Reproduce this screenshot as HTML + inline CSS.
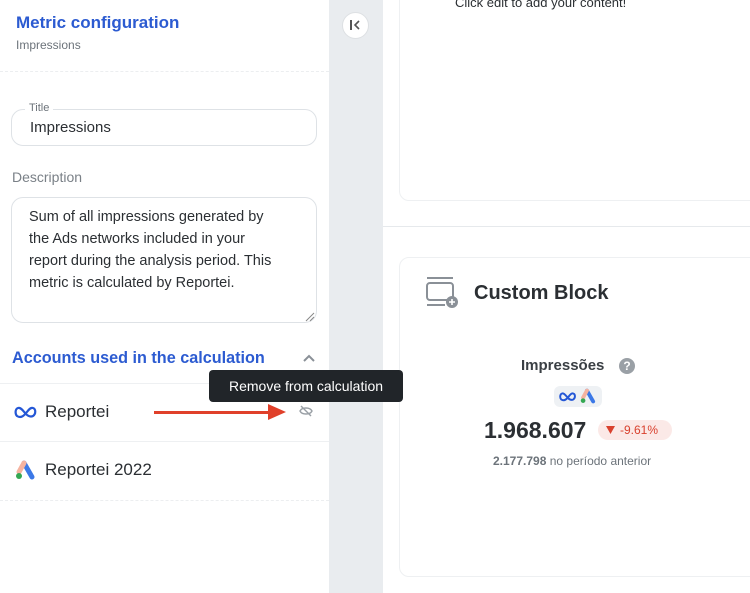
<!DOCTYPE html>
<html><head><style>
*{box-sizing:border-box;margin:0;padding:0}
body{width:750px;height:593px;overflow:hidden;background:#fff;font-family:"Liberation Sans",sans-serif;position:relative;color:#2b2f33}
.abs{position:absolute}
</style></head><body>
<div class="abs" style="left:0;top:0;width:329px;height:593px;background:#fff"></div>
<div class="abs" style="left:16px;top:13px;font-size:17px;font-weight:bold;color:#2c5bd1">Metric configuration</div>
<div class="abs" style="left:16px;top:38px;font-size:12px;color:#6c737a">Impressions</div>
<div class="abs" style="left:0;top:71px;width:329px;border-top:1px dashed #eceef0"></div>
<div class="abs" style="left:11px;top:109px;width:306px;height:37px;border:1px solid #dee2e6;border-radius:12px"></div>
<div class="abs" style="left:25px;top:102px;padding:0 4px;background:#fff;font-size:11px;color:#6c737a">Title</div>
<div class="abs" style="left:30px;top:119px;font-size:15px;color:#2b2f33">Impressions</div>
<div class="abs" style="left:12px;top:169px;font-size:14px;color:#7a8087">Description</div>
<div class="abs" style="left:11px;top:197px;width:306px;height:126px;border:1px solid #dee2e6;border-radius:12px"></div>
<div class="abs" style="left:29px;top:206px;width:254px;font-size:14.5px;line-height:22px;color:#2b2f33">Sum of all impressions generated by the Ads networks included in your report during the analysis period. This metric is calculated by Reportei.</div>
<svg class="abs" style="left:305px;top:312px" width="10" height="10"><path d="M1 9L9 1M5 9L9 5" stroke="#888" stroke-width="1"/></svg>
<div class="abs" style="left:12px;top:349px;font-size:16.2px;font-weight:bold;color:#2c5bd1">Accounts used in the calculation</div>
<svg class="abs" style="left:302px;top:353px" width="14" height="10"><path d="M2 8L7 3L12 8" stroke="#8a9097" stroke-width="2" fill="none"/></svg>
<div class="abs" style="left:0;top:383px;width:329px;border-top:1px solid #eef0f2"></div>
<svg class="abs" style="left:14px;top:405px" width="24" height="14" viewBox="0 0 24 14"><path d="M3 11C1 9 1 4 4 3C7 2 9 6 12 9C15 12 17 12 19 11C22 9 22 4 19 3C16 2 14 6 12 8C9 12 6 13 3 11Z" fill="none" stroke="#2457d6" stroke-width="2.2"/></svg>
<div class="abs" style="left:45px;top:402px;font-size:17px;color:#2b2f33">Reportei</div>
<div class="abs" style="left:154px;top:411px;width:120px;height:3px;background:#e0402a"></div>
<svg class="abs" style="left:268px;top:404px" width="18" height="16"><path d="M0 0L18 8L0 16Z" fill="#e0402a"/></svg>
<svg class="abs" style="left:299px;top:405px" width="14" height="12" viewBox="0 0 14 12"><path d="M1 6C3 2 11 2 13 6C11 10 3 10 1 6Z" fill="none" stroke="#9aa0a6" stroke-width="1.4"/><path d="M2 1L12 11" stroke="#9aa0a6" stroke-width="1.4"/></svg>
<div class="abs" style="left:0;top:441px;width:329px;border-top:1px solid #eef0f2"></div>
<svg class="abs" style="left:15px;top:460px" width="22" height="20" viewBox="0 0 22 20"><path d="M9 3L17 17" stroke="#3b78e7" stroke-width="5" stroke-linecap="round"/><path d="M9 3L4 12" stroke="#f5b3a0" stroke-width="5" stroke-linecap="round"/><circle cx="4" cy="16" r="3" fill="#34a853"/></svg>
<div class="abs" style="left:45px;top:460px;font-size:17px;color:#2b2f33">Reportei 2022</div>
<div class="abs" style="left:0;top:500px;width:329px;border-top:1px dashed #eceef0"></div>
<div class="abs" style="left:329px;top:0;width:54px;height:593px;background:#e9ecef"></div>
<div class="abs" style="left:342px;top:12px;width:27px;height:27px;border-radius:50%;background:#fff;border:1px solid #dde0e3"></div>
<svg class="abs" style="left:349px;top:19px" width="14" height="12"><path d="M2 1V11" stroke="#555" stroke-width="2"/><path d="M10 2L6 6L10 10" stroke="#555" stroke-width="1.6" fill="none"/></svg>
<div class="abs" style="left:399px;top:-10px;width:360px;height:211px;border:1px solid #eef0f2;border-radius:10px"></div>
<div class="abs" style="left:455px;top:-5px;font-size:13px;color:#2b2f33">Click edit to add your content!</div>
<div class="abs" style="left:383px;top:226px;width:367px;border-top:1px solid #e6e9ec"></div>
<div class="abs" style="left:399px;top:257px;width:360px;height:320px;border:1px solid #eef0f2;border-radius:10px"></div>
<svg class="abs" style="left:425px;top:276px" width="34" height="32" viewBox="0 0 34 32"><path d="M2 2H28" stroke="#8a9097" stroke-width="2"/><rect x="2" y="7" width="26" height="17" rx="3" fill="none" stroke="#8a9097" stroke-width="2"/><path d="M2 29H20" stroke="#8a9097" stroke-width="2"/><circle cx="27" cy="26" r="6" fill="#8a9097"/><path d="M27 23V29M24 26H30" stroke="#fff" stroke-width="1.6"/></svg>
<div class="abs" style="left:474px;top:282px;font-size:20px;font-weight:bold;color:#2b2f33">Custom Block</div>
<div class="abs" style="left:521px;top:357px;font-size:15px;font-weight:bold;color:#3a3f44">Impressões</div>
<div class="abs" style="left:619px;top:358px;width:16px;height:16px;border-radius:50%;background:#9aa0a6;color:#fff;font-size:12px;font-weight:bold;text-align:center;line-height:16px">?</div>
<div class="abs" style="left:554px;top:386px;width:48px;height:21px;border-radius:6px;background:#eef1f4"></div>
<svg class="abs" style="left:559px;top:391px" width="18" height="11" viewBox="0 0 24 14"><path d="M3 11C1 9 1 4 4 3C7 2 9 6 12 9C15 12 17 12 19 11C22 9 22 4 19 3C16 2 14 6 12 8C9 12 6 13 3 11Z" fill="none" stroke="#2457d6" stroke-width="2.6"/></svg>
<svg class="abs" style="left:580px;top:388px" width="17" height="16" viewBox="0 0 22 20"><path d="M9 3L17 17" stroke="#3b78e7" stroke-width="5" stroke-linecap="round"/><path d="M9 3L4 12" stroke="#f5b3a0" stroke-width="5" stroke-linecap="round"/><circle cx="4" cy="16" r="3" fill="#34a853"/></svg>
<div class="abs" style="left:484px;top:417px;font-size:23px;font-weight:bold;color:#2b2f33">1.968.607</div>
<div class="abs" style="left:598px;top:420px;width:74px;height:20px;border-radius:10px;background:#fbe9e7;color:#d9412e;font-size:12px;line-height:20px;padding-left:22px">-9.61%</div>
<svg class="abs" style="left:606px;top:426px" width="9" height="8"><path d="M0 0H9L4.5 8Z" fill="#d9412e"/></svg>
<div class="abs" style="left:493px;top:454px;font-size:12px;color:#6c737a"><b>2.177.798</b> no período anterior</div>
<div class="abs" style="left:209px;top:370px;width:194px;height:32px;background:#212529;border-radius:4px;color:#fff;font-size:14px;line-height:32px;text-align:center;z-index:10">Remove from calculation</div>
</body></html>
